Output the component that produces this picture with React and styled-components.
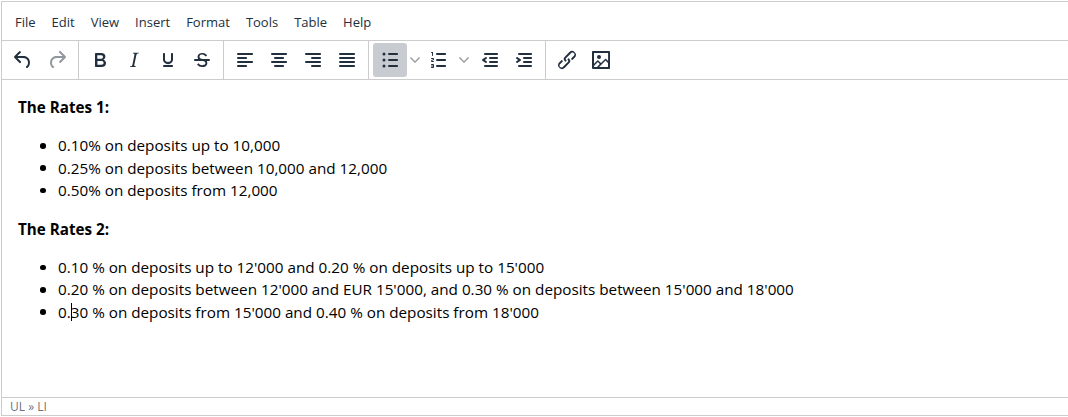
import React from "react";
import styled, { createGlobalStyle } from "styled-components";

const Global = createGlobalStyle`
  html, body { margin: 0; padding: 0; overflow: hidden; background: #fff; }
  body { width: 1068px; height: 417px; }
`;

const FONT = `"Open Sans", "Noto Sans", "Liberation Sans", sans-serif`;

const Editor = styled.div`
  box-sizing: border-box; margin: 1px 0 0 1px; width: 1080px; height: 415px;
  border: 1px solid #ccc; display: flex; flex-direction: column;
  background: #fff; color: #222f3e; font-family: ${FONT};
`;
const MenuBar = styled.nav`
  box-sizing: border-box; height: 39px; padding: 2px 5px 0; display: flex; align-items: center;
  border-bottom: 1px solid #ccc;
`;
const MenuItem = styled.span`
  padding: 0 8px; font-size: 13px; line-height: 34px; color: #222f3e; white-space: nowrap;
`;
const Toolbar = styled.div`
  box-sizing: border-box; height: 39px; display: flex; border-bottom: 1px solid #ccc;
`;
const Group = styled.div`
  display: flex; align-items: center; padding: 0 4px;
  border-right: ${p => (p.$last ? "none" : "1px solid #ccc")};
`;
const Button = styled.div`
  width: 34px; height: 34px; border-radius: 3px; display: flex; align-items: center; justify-content: center;
  background: ${p => (p.$active ? "#c8cbcf" : "transparent")};
  margin-left: ${p => p.$shift || 0}px;
  svg { fill: ${p => (p.$disabled ? "rgba(34,47,62,.5)" : "#222f3e")}; display: block; }
`;
const Chevron = styled.div`
  width: ${p => p.$w || 16}px; height: 34px; display: flex; align-items: center; justify-content: center;
  svg { fill: rgba(34,47,62,.5); display: block; }
`;
const Content = styled.div`
  flex: 1; padding: 16px; color: #000; font-size: 15.25px; line-height: 22.4px;
  p { margin: 16px 0; font-weight: 700; font-size: 15.2px; }
  p:first-child { margin-top: 0; }
  ul { margin: 16px 0; padding-left: 40px; list-style: none; }
`;
const Item = styled.li`
  position: relative;
  &::before {
    content: ""; position: absolute; left: -18px; top: 8.5px;
    width: 5.6px; height: 5.6px; border-radius: 50%; background: #000;
  }
`;
const Caret = styled.span`
  position: relative; display: inline-block; width: 0; height: 0;
  &::after { content: ""; position: absolute; left: 0; top: -15px; width: 1px; height: 18px; background: #000; }
`;
const StatusBar = styled.div`
  box-sizing: border-box; height: 18px; padding: 0 8px; border-top: 1px solid #ccc;
  font-size: 12px; line-height: 18px; color: rgba(34,47,62,.7);
`;

const paths = {
  undo: "M6.4 8H12c3.7 0 6.2 2 6.8 5.1.6 2.7-.4 5.6-2.3 6.8a1 1 0 0 1-1-1.8c1.1-.6 1.8-2.7 1.4-4.6-.5-2.1-2.1-3.5-4.9-3.5H6.4l3.3 3.3a1 1 0 1 1-1.4 1.4l-5-5a1 1 0 0 1 0-1.4l5-5a1 1 0 0 1 1.4 1.4L6.4 8Z",
  redo: "M17.6 10H12c-2.8 0-4.4 1.4-4.9 3.5-.4 2 .3 4 1.4 4.6a1 1 0 1 1-1 1.8c-2-1.2-2.9-4.1-2.3-6.8.6-3 3-5.1 6.8-5.1h5.6l-3.3-3.3a1 1 0 1 1 1.4-1.4l5 5a1 1 0 0 1 0 1.4l-5 5a1 1 0 0 1-1.4-1.4l3.3-3.3Z",
  bold: "M7.8 19c-.3 0-.5 0-.6-.2l-.2-.5V5.7c0-.2 0-.4.2-.5l.6-.2h5c1.5 0 2.7.3 3.5 1 .7.6 1.1 1.4 1.1 2.5a3 3 0 0 1-.6 1.9c-.4.6-1 1-1.6 1.2.4.1.9.3 1.3.6s.8.7 1 1.2c.4.4.5 1 .5 1.6 0 1.3-.4 2.3-1.3 3-.8.7-2.1 1-3.8 1H7.8Zm5-8.3c.6 0 1.2-.1 1.6-.5.4-.3.6-.7.6-1.3 0-1.1-.8-1.7-2.3-1.7H9.3v3.5h3.4Zm.5 6c.7 0 1.3-.1 1.7-.4.4-.4.6-.9.6-1.5s-.2-1-.7-1.4c-.4-.3-1-.4-2-.4H9.4v3.8h4Z",
  italic: "m16.7 4.7-.1.9h-.3c-.6 0-1 0-1.4.3-.3.3-.4.6-.5 1.1l-2.1 9.8v.6c0 .5.4.8 1.4.8h.2l-.2.8H8l.2-.8h.2c1.1 0 1.8-.5 2-1.5l2-9.8.1-.5c0-.6-.4-.8-1.4-.8h-.3l.2-.9h5.8Z",
  underline: "M16 5c.6 0 1 .4 1 1v5.5a4 4 0 0 1-.4 1.8l-1 1.4a5.3 5.3 0 0 1-5.5 1 5 5 0 0 1-1.6-1c-.5-.4-.8-.9-1.1-1.4a4 4 0 0 1-.4-1.8V6c0-.6.4-1 1-1s1 .4 1 1v5.5c0 .3 0 .6.2 1l.6.7a3.3 3.3 0 0 0 2.2.8 3.4 3.4 0 0 0 2.2-.8c.3-.2.4-.5.6-.8l.2-.9V6c0-.6.4-1 1-1ZM8 17h8c.6 0 1 .4 1 1s-.4 1-1 1H8a1 1 0 0 1 0-2Z",
  strike: "M15.6 8.5c-.5-.7-1-1.1-1.3-1.3-.6-.4-1.3-.6-2-.6-2.7 0-2.8 1.7-2.8 2.1 0 1.6 1.8 2 3.2 2.3 4.4.9 4.6 2.8 4.6 3.9 0 1.4-.7 4.1-5 4.1A6.2 6.2 0 0 1 7 16.4l1.5-1.1c.4.6 1.6 2 3.7 2 1.6 0 2.5-.4 3-1.2.4-.8.3-2-.8-2.6-.7-.4-1.6-.7-2.9-1-1-.2-3.9-.8-3.9-3.6C7.6 6 10.3 5 12.4 5c2.9 0 4.2 1.6 4.7 2.4l-1.5 1.1ZM5 11h14a1 1 0 0 1 0 2H5a1 1 0 0 1 0-2Z",
  left: "M5 5h14c.6 0 1 .4 1 1s-.4 1-1 1H5a1 1 0 1 1 0-2Zm0 4h8c.6 0 1 .4 1 1s-.4 1-1 1H5a1 1 0 1 1 0-2Zm0 8h8c.6 0 1 .4 1 1s-.4 1-1 1H5a1 1 0 0 1 0-2Zm0-4h14c.6 0 1 .4 1 1s-.4 1-1 1H5a1 1 0 0 1 0-2Z",
  center: "M5 5h14c.6 0 1 .4 1 1s-.4 1-1 1H5a1 1 0 1 1 0-2Zm3 4h8c.6 0 1 .4 1 1s-.4 1-1 1H8a1 1 0 1 1 0-2Zm0 8h8c.6 0 1 .4 1 1s-.4 1-1 1H8a1 1 0 0 1 0-2Zm-3-4h14c.6 0 1 .4 1 1s-.4 1-1 1H5a1 1 0 0 1 0-2Z",
  right: "M5 5h14c.6 0 1 .4 1 1s-.4 1-1 1H5a1 1 0 1 1 0-2Zm6 4h8c.6 0 1 .4 1 1s-.4 1-1 1h-8a1 1 0 0 1 0-2Zm0 8h8c.6 0 1 .4 1 1s-.4 1-1 1h-8a1 1 0 0 1 0-2Zm-6-4h14c.6 0 1 .4 1 1s-.4 1-1 1H5a1 1 0 0 1 0-2Z",
  justify: "M5 5h14c.6 0 1 .4 1 1s-.4 1-1 1H5a1 1 0 1 1 0-2Zm0 4h14c.6 0 1 .4 1 1s-.4 1-1 1H5a1 1 0 1 1 0-2Zm0 4h14c.6 0 1 .4 1 1s-.4 1-1 1H5a1 1 0 0 1 0-2Zm0 4h14c.6 0 1 .4 1 1s-.4 1-1 1H5a1 1 0 0 1 0-2Z",
  bullist: "M11 5h8c.6 0 1 .4 1 1s-.4 1-1 1h-8a1 1 0 0 1 0-2Zm0 6h8c.6 0 1 .4 1 1s-.4 1-1 1h-8a1 1 0 0 1 0-2Zm0 6h8c.6 0 1 .4 1 1s-.4 1-1 1h-8a1 1 0 0 1 0-2ZM6 4.5a1.5 1.5 0 1 1 0 3 1.5 1.5 0 0 1 0-3Zm0 6a1.5 1.5 0 1 1 0 3 1.5 1.5 0 0 1 0-3Zm0 6a1.5 1.5 0 1 1 0 3 1.5 1.5 0 0 1 0-3Z",
  numlist: "M10 17h8c.6 0 1 .4 1 1s-.4 1-1 1h-8a1 1 0 0 1 0-2Zm0-6h8c.6 0 1 .4 1 1s-.4 1-1 1h-8a1 1 0 0 1 0-2Zm0-6h8c.6 0 1 .4 1 1s-.4 1-1 1h-8a1 1 0 1 1 0-2ZM6 4v3.5c0 .3-.2.5-.5.5a.5.5 0 0 1-.5-.5V5h-.5a.5.5 0 0 1 0-1H6Zm-1 8.8.2.2h1.3c.3 0 .5.2.5.5s-.2.5-.5.5H4.9a1 1 0 0 1-.9-1V13c0-.4.3-.8.6-1l1.2-.4.2-.3a.2.2 0 0 0-.2-.2H4.5a.5.5 0 0 1-.5-.5c0-.3.2-.5.5-.5h1.6c.5 0 .9.4.9 1v.1c0 .4-.3.8-.6 1l-1.2.4-.2.3ZM7 17v2c0 .6-.4 1-1 1H4.5a.5.5 0 0 1 0-1h1.2c.2 0 .3-.1.3-.3 0-.2-.1-.3-.3-.3H4.4a.4.4 0 1 1 0-.8h1.3c.2 0 .3-.1.3-.3 0-.2-.1-.3-.3-.3H4.5a.5.5 0 1 1 0-1H6c.6 0 1 .4 1 1Z",
  outdent: "M7 5h12c.6 0 1 .4 1 1s-.4 1-1 1H7a1 1 0 1 1 0-2Zm5 4h7c.6 0 1 .4 1 1s-.4 1-1 1h-7a1 1 0 0 1 0-2Zm0 4h7c.6 0 1 .4 1 1s-.4 1-1 1h-7a1 1 0 0 1 0-2Zm-5 4h12a1 1 0 0 1 0 2H7a1 1 0 0 1 0-2Zm1.6-3.8a1 1 0 0 1-1.2 1.6l-3-2a1 1 0 0 1 0-1.6l3-2a1 1 0 0 1 1.2 1.6L6.8 12l1.8 1.2Z",
  indent: "M7 5h12c.6 0 1 .4 1 1s-.4 1-1 1H7a1 1 0 1 1 0-2Zm5 4h7c.6 0 1 .4 1 1s-.4 1-1 1h-7a1 1 0 0 1 0-2Zm0 4h7c.6 0 1 .4 1 1s-.4 1-1 1h-7a1 1 0 0 1 0-2Zm-5 4h12a1 1 0 0 1 0 2H7a1 1 0 0 1 0-2Zm-2.6-3.8L6.2 12l-1.8-1.2a1 1 0 0 1 1.2-1.6l3 2a1 1 0 0 1 0 1.6l-3 2a1 1 0 1 1-1.2-1.6Z",
  link: "M6.2 12.3a1 1 0 0 1 1.4 1.4l-2 2a2 2 0 1 0 2.6 2.8l4.8-4.8a1 1 0 0 0 0-1.4 1 1 0 1 1 1.4-1.3 2.9 2.9 0 0 1 0 4L9.6 20a3.9 3.9 0 0 1-5.5-5.5l2-2Zm11.6-.6a1 1 0 0 1-1.4-1.4l2-2a2 2 0 1 0-2.6-2.8L11 10.3a1 1 0 0 0 0 1.4 1 1 0 1 1-1.4 1.3 2.9 2.9 0 0 1 0-4L14.4 4a3.9 3.9 0 0 1 5.5 5.5l-2 2Z",
  image: "M5 15.7l3.3-3.2c.3-.3.7-.3 1 0L12 15l4.1-4c.3-.4.8-.4 1 0l2 1.9V5H5v10.7ZM5 18v1h3l2.8-2.9-2-2L5 17.9Zm14-3l-2.5-2.4-6.4 6.5H19v-4ZM4 3h16c.6 0 1 .4 1 1v16c0 .6-.4 1-1 1H4a1 1 0 0 1-1-1V4c0-.6.4-1 1-1Zm6 8a2 2 0 1 0 0-4 2 2 0 0 0 0 4Z",
};

const Icon = ({ name }) => (
  <svg width="24" height="24" viewBox="0 0 24 24" fillRule={name === "image" ? "evenodd" : "nonzero"}><path d={paths[name]} /></svg>
);
const Caretdown = () => (
  <svg width="10" height="6" viewBox="0 0 10 6"><path d="M5 6 0 1 .9.1 5 4.2 9.1.1 10 1Z" /></svg>
);

const Btn = ({ name, ...rest }) => <Button {...rest}><Icon name={name} /></Button>;

const menu = ["File", "Edit", "View", "Insert", "Format", "Tools", "Table", "Help"];

export default function App() {
  return (
    <>
      <Global />
      <Editor>
        <MenuBar>{menu.map(m => <MenuItem key={m}>{m}</MenuItem>)}</MenuBar>
        <Toolbar>
          <Group><Btn name="undo" /><Btn name="redo" $disabled /></Group>
          <Group><Btn name="bold" /><Btn name="italic" /><Btn name="underline" /><Btn name="strike" /></Group>
          <Group><Btn name="left" /><Btn name="center" /><Btn name="right" /><Btn name="justify" /></Group>
          <Group>
            <Btn name="bullist" $active />
            <Chevron $w={15}><Caretdown /></Chevron>
            <Btn name="numlist" />
            <Chevron $w={16}><Caretdown /></Chevron>
            <Btn name="outdent" $shift={1} />
            <Btn name="indent" />
          </Group>
          <Group $last><Btn name="link" /><Btn name="image" /></Group>
        </Toolbar>
        <Content>
          <p>The Rates 1:</p>
          <ul>
            <Item>0.10% on deposits up to 10,000</Item>
            <Item>0.25% on deposits between 10,000 and 12,000</Item>
            <Item>0.50% on deposits from 12,000</Item>
          </ul>
          <p>The Rates 2:</p>
          <ul>
            <Item>0.10 % on deposits up to 12'000 and 0.20 % on deposits up to 15'000</Item>
            <Item>0.20 % on deposits between 12'000 and EUR 15'000, and 0.30 % on deposits between 15'000 and 18'000</Item>
            <Item>0.<Caret />30 % on deposits from 15'000 and 0.40 % on deposits from 18'000</Item>
          </ul>
        </Content>
        <StatusBar>UL » LI</StatusBar>
      </Editor>
    </>
  );
}
